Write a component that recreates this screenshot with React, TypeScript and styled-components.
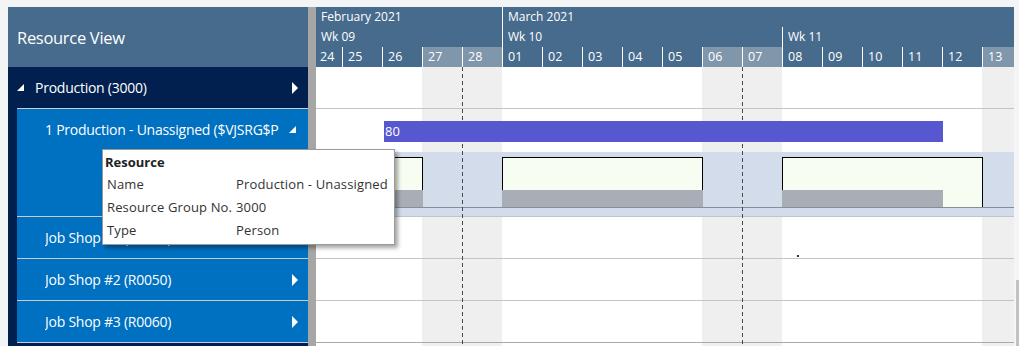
import React from "react";
import styled, { createGlobalStyle } from "styled-components";

const GlobalStyle = createGlobalStyle`
  html, body {
    margin: 0;
    background: #f3f4f6;
    font-family: "Open Sans", "Noto Sans", sans-serif;
  }
`;

type Day = { label: string; width: number; weekend?: boolean; marker?: boolean };

const days: Day[] = [
  { label: "24", width: 26 },
  { label: "25", width: 40 },
  { label: "26", width: 40 },
  { label: "27", width: 40, weekend: true },
  { label: "28", width: 40, weekend: true, marker: true },
  { label: "01", width: 40 },
  { label: "02", width: 40 },
  { label: "03", width: 40 },
  { label: "04", width: 40 },
  { label: "05", width: 40 },
  { label: "06", width: 40, weekend: true },
  { label: "07", width: 40, weekend: true, marker: true },
  { label: "08", width: 40 },
  { label: "09", width: 40 },
  { label: "10", width: 40 },
  { label: "11", width: 40 },
  { label: "12", width: 40 },
  { label: "13", width: 32, weekend: true },
];

const months = [
  { label: "February 2021", width: 186 },
  { label: "March 2021", width: 0 },
];

const weeks = [
  { label: "Wk 09", width: 186 },
  { label: "Wk 10", width: 280 },
  { label: "Wk 11", width: 0 },
];

const shifts = [
  { left: -20, width: 127, load: 127 },
  { left: 186, width: 201, load: 201 },
  { left: 466, width: 201, load: 161 },
];

const Frame = styled.div`
  position: relative;
  display: flex;
  margin: 7px 0 0 8px;
  height: 339px;
  width: 1011px;
  overflow: hidden;
`;

const LeftPane = styled.div`
  width: 300px;
  flex-shrink: 0;
  background: #012050;
  display: flex;
  flex-direction: column;
`;

const PaneHeader = styled.div`
  height: 60px;
  flex-shrink: 0;
  background: #476b8c;
  color: #ffffff;
  font-size: 16.5px;
  display: flex;
  align-items: center;
  padding-left: 9px;
  letter-spacing: -0.3px;
`;

const ParentRow = styled.div`
  height: 41px;
  display: flex;
  align-items: center;
  padding: 0 10px 0 9px;
  color: #ffffff;
  font-size: 14px;
  letter-spacing: -0.25px;
`;

const ChildGroup = styled.div`
  margin-left: 9px;
  border-top: 1px solid #c8cdd4;
`;

const ChildRow = styled.div<{ $height: number }>`
  height: ${(p) => p.$height}px;
  background: #0070c1;
  border-bottom: 1px solid #c8cdd4;
  display: flex;
  align-items: flex-start;
  padding: 0 10px 0 28px;
  color: #ffffff;
  font-size: 14px;
  letter-spacing: -0.25px;
`;

const RowLabel = styled.span`
  flex: 1;
  line-height: 41px;
  white-space: nowrap;
  overflow: hidden;
`;

const ParentLabel = styled.span`
  flex: 1;
  margin-left: 11px;
`;

const Glyph = styled.svg`
  flex-shrink: 0;
  fill: #ffffff;
`;

const RowGlyph = styled.div<{ $inset?: boolean }>`
  height: 41px;
  display: flex;
  align-items: center;
  padding: ${(p) => (p.$inset ? "0 2px 0 6px" : "0")};
`;

const Splitter = styled.div`
  width: 8px;
  flex-shrink: 0;
  background: #a6a6a6;
`;

const Chart = styled.div`
  width: 698px;
  flex-shrink: 0;
  display: flex;
  flex-direction: column;
  background: #ffffff;
`;

const TimeHeader = styled.div`
  height: 60px;
  background: #476b8c;
  color: #ffffff;
  display: flex;
  flex-direction: column;
`;

const HeaderBand = styled.div`
  display: flex;
  height: 20px;
`;

const HeaderCell = styled.div<{ $width: number; $divider?: boolean }>`
  ${(p) => (p.$width ? `width: ${p.$width}px;` : "flex: 1;")}
  flex-shrink: 0;
  box-sizing: border-box;
  border-left: ${(p) => (p.$divider ? "1px solid #ffffff" : "none")};
  padding-left: 5px;
  font-size: 12px;
  line-height: 20px;
  white-space: nowrap;
`;

const DayCell = styled.div<{ $width: number; $weekend?: boolean; $divider?: boolean }>`
  width: ${(p) => p.$width}px;
  flex-shrink: 0;
  box-sizing: border-box;
  background: ${(p) => (p.$weekend ? "#7f96ab" : "transparent")};
  border-left: ${(p) => (p.$divider ? "1px solid #ffffff" : "none")};
  padding-left: ${(p) => (p.$divider ? 5 : 4)}px;
  font-size: 12.5px;
  line-height: 20px;
`;

const ChartBody = styled.div`
  position: relative;
  z-index: 0;
  flex: 1;
`;

const ColumnsLayer = styled.div`
  position: absolute;
  inset: 0;
  display: flex;
`;

const BodyColumn = styled.div<{ $width: number; $weekend?: boolean; $marker?: boolean }>`
  position: relative;
  width: ${(p) => p.$width}px;
  flex-shrink: 0;
  background: ${(p) => (p.$weekend ? "#efefef" : "transparent")};

  &::before {
    content: "";
    display: ${(p) => (p.$marker ? "block" : "none")};
    position: absolute;
    left: 0;
    top: 0;
    bottom: 0;
    width: 1px;
    z-index: 1;
    background: repeating-linear-gradient(to bottom, #4a4a4a 0 4px, transparent 4px 7px);
  }
`;

const LaneRow = styled.div<{ $height: number; $last?: boolean }>`
  position: relative;
  height: ${(p) => p.$height}px;
  border-bottom: 1px solid ${(p) => (p.$last ? "#a9a9a9" : "#c4c4c4")};
  display: flex;
  flex-direction: column;
  justify-content: flex-end;
`;

const TaskBar = styled.div<{ $left: number; $width: number }>`
  position: absolute;
  z-index: 2;
  top: 12px;
  left: ${(p) => p.$left}px;
  width: ${(p) => p.$width}px;
  height: 21px;
  background: #5757cf;
  color: #ffffff;
  font-size: 13px;
  line-height: 21px;
  padding-left: 1px;
  box-sizing: border-box;
`;

const CapacityBand = styled.div`
  height: 64px;
  background: #d3dceb;
  padding-top: 5px;
  box-sizing: border-box;
`;

const ShiftLane = styled.div`
  position: relative;
  height: 51px;
  border-bottom: 1px solid #8a8d93;
  box-sizing: border-box;
`;

const ShiftBlock = styled.div<{ $left: number; $width: number }>`
  position: absolute;
  top: 0;
  bottom: 0;
  left: ${(p) => p.$left}px;
  width: ${(p) => p.$width}px;
  box-sizing: border-box;
  border: 1px solid #000000;
  border-bottom: none;
  background: #f7fdf0;
`;

const LoadFill = styled.div<{ $width: number }>`
  position: absolute;
  left: -1px;
  bottom: 0;
  height: 17px;
  width: ${(p) => p.$width}px;
  background: #a9adb5;
`;

const Speck = styled.div`
  position: absolute;
  left: 481px;
  top: 38px;
  width: 2px;
  height: 2px;
  background: #333333;
`;

const Scrollbar = styled.div`
  width: 5px;
  flex-shrink: 0;
  background: #f5f5f5;
  display: flex;
  flex-direction: column;
  justify-content: flex-end;
`;

const Thumb = styled.div`
  height: 66px;
  margin-left: 2px;
  background: #c2c2c2;
`;

const Tooltip = styled.div`
  position: absolute;
  z-index: 10;
  left: 94px;
  top: 142px;
  width: 293px;
  height: 96px;
  box-sizing: border-box;
  background: #ffffff;
  border: 1px solid #9a9a9a;
  box-shadow: 3px 3px 4px rgba(0, 0, 0, 0.35);
  padding: 2px 2px 0 2px;
  color: #222222;
  font-size: 13px;
  letter-spacing: 0.15px;
`;

const TipTitle = styled.div`
  font-weight: 700;
  line-height: 20px;
  letter-spacing: 0;
`;

const TipGrid = styled.div`
  display: grid;
  grid-template-columns: 131px 1fr;
  grid-auto-rows: 23px;
  align-items: center;
  color: #333333;
  white-space: nowrap;
`;

const TipLabel = styled.span`
  padding-left: 2px;
`;

const Collapse = () => (
  <Glyph width="7" height="7" viewBox="0 0 7 7">
    <polygon points="7,0 7,7 0,7" />
  </Glyph>
);

const Expand = () => (
  <Glyph width="6" height="12" viewBox="0 0 6 12">
    <polygon points="0,0 6,6 0,12" />
  </Glyph>
);

const App = () => {
  return (
    <>
      <GlobalStyle />
      <Frame>
        <LeftPane>
          <PaneHeader>Resource View</PaneHeader>
          <ParentRow>
            <Collapse />
            <ParentLabel>Production (3000)</ParentLabel>
            <Expand />
          </ParentRow>
          <ChildGroup>
            <ChildRow $height={107}>
              <RowLabel>1 Production - Unassigned ($VJSRG$P</RowLabel>
              <RowGlyph $inset>
                <Collapse />
              </RowGlyph>
            </ChildRow>
            <ChildRow $height={41}>
              <RowLabel>Job Shop #1 (R0040)</RowLabel>
              <RowGlyph>
                <Expand />
              </RowGlyph>
            </ChildRow>
            <ChildRow $height={41}>
              <RowLabel>Job Shop #2 (R0050)</RowLabel>
              <RowGlyph>
                <Expand />
              </RowGlyph>
            </ChildRow>
            <ChildRow $height={41}>
              <RowLabel>Job Shop #3 (R0060)</RowLabel>
              <RowGlyph>
                <Expand />
              </RowGlyph>
            </ChildRow>
          </ChildGroup>
        </LeftPane>

        <Splitter />

        <Chart>
          <TimeHeader>
            <HeaderBand>
              {months.map((m, i) => (
                <HeaderCell key={m.label} $width={m.width} $divider={i > 0}>
                  {m.label}
                </HeaderCell>
              ))}
            </HeaderBand>
            <HeaderBand>
              {weeks.map((w, i) => (
                <HeaderCell key={w.label} $width={w.width} $divider={i > 0}>
                  {w.label}
                </HeaderCell>
              ))}
            </HeaderBand>
            <HeaderBand>
              {days.map((d, i) => (
                <DayCell key={d.label} $width={d.width} $weekend={d.weekend} $divider={i > 0}>
                  {d.label}
                </DayCell>
              ))}
            </HeaderBand>
          </TimeHeader>

          <ChartBody>
            <ColumnsLayer>
              {days.map((d) => (
                <BodyColumn key={d.label} $width={d.width} $weekend={d.weekend} $marker={d.marker} />
              ))}
            </ColumnsLayer>

            <LaneRow $height={41} />
            <LaneRow $height={107}>
              <TaskBar $left={68} $width={559}>80</TaskBar>
              <CapacityBand>
                <ShiftLane>
                  {shifts.map((s) => (
                    <ShiftBlock key={s.left} $left={s.left} $width={s.width}>
                      <LoadFill $width={s.load} />
                    </ShiftBlock>
                  ))}
                </ShiftLane>
              </CapacityBand>
            </LaneRow>
            <LaneRow $height={41}>
              <Speck />
            </LaneRow>
            <LaneRow $height={41} />
            <LaneRow $height={41} $last />
          </ChartBody>
        </Chart>

        <Scrollbar>
          <Thumb />
        </Scrollbar>

        <Tooltip>
          <TipTitle>Resource</TipTitle>
          <TipGrid>
            <TipLabel>Name</TipLabel>
            <span>Production - Unassigned</span>
            <TipLabel>Resource Group No.</TipLabel>
            <span>3000</span>
            <TipLabel>Type</TipLabel>
            <span>Person</span>
          </TipGrid>
        </Tooltip>
      </Frame>
    </>
  );
};

export default App;
